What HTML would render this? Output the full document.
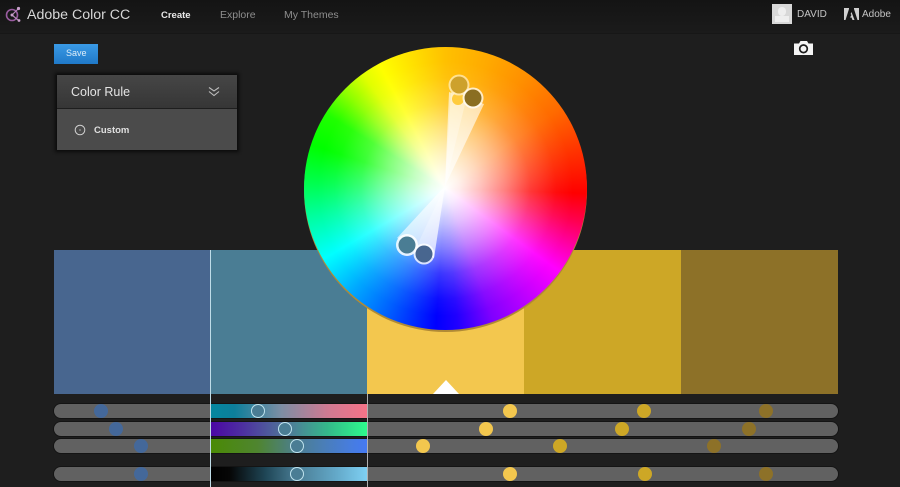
<!DOCTYPE html>
<html>
<head>
<meta charset="utf-8">
<style>
html,body{margin:0;padding:0;background:#1e1e1e;}
#p{position:relative;width:900px;height:487px;overflow:hidden;background:#1e1e1e;font-family:"Liberation Sans",sans-serif;color:#ddd;}
#p div{position:absolute;}
.t{white-space:nowrap;line-height:1;}
#hd{left:0;top:0;width:900px;height:33px;background:linear-gradient(#141414,#1b1b1b);border-bottom:1px solid #171717;}
.sw{top:250px;height:143.5px;}
.tr{left:54px;width:784px;height:14px;border-radius:7px;background:#616161;box-shadow:0 0 0 1px #141414;}
.g{left:211px;width:156px;height:14px;}
.d{width:14px;height:14px;border-radius:50%;}
.r{width:12px;height:12px;border-radius:50%;border:1px solid #bfe3ee;background:#4a7d94;}
#wheel{left:304px;top:46.5px;width:283px;height:283px;border-radius:50%;overflow:hidden;
background:conic-gradient(from 0deg,#ffc000 0deg,#ffaa00 18deg,#ff9000 35deg,#ff6a00 55deg,#ff3000 75deg,#ff0000 92deg,#ff0050 104deg,#ff00a0 114deg,#ff00ff 126deg,#c000ff 143deg,#8000ff 160deg,#2000ff 175deg,#0000ff 184deg,#0060ff 205deg,#00a8ff 222deg,#00ffff 240deg,#00ffa0 258deg,#00ff50 272deg,#00ff00 288deg,#20ff00 302deg,#90ff00 314deg,#e0ff00 324deg,#ffff00 332deg,#ffe800 342deg,#ffd400 351deg,#ffc000 360deg);}
#shadow{left:304px;top:49px;width:283px;height:283px;border-radius:50%;background:#b08a35;}
#glow{left:0;top:0;width:283px;height:283px;background:radial-gradient(circle closest-side at 50% 50%,#fff 0,rgba(255,255,255,.92) 10%,rgba(255,255,255,.74) 25%,rgba(255,255,255,.5) 42%,rgba(255,255,255,.22) 60%,rgba(255,255,255,.05) 78%,rgba(255,255,255,0) 90%);}
</style>
</head>
<body>
<div id="p">
<div id="hd"></div>
<svg style="position:absolute;left:3px;top:5px" width="20" height="20" viewBox="0 0 20 20"><circle cx="9" cy="10" r="5.5" fill="none" stroke="#9a5ca0" stroke-width="1.6"/><path d="M9 10L15 4M9 10L15 15" stroke="#b58ab8" stroke-width="1.2"/><circle cx="15.5" cy="3.5" r="1.6" fill="#c9a0cc"/><circle cx="16" cy="15.5" r="1.4" fill="#c9a0cc"/><circle cx="9" cy="10" r="1.5" fill="#c9a0cc"/></svg>
<div class="t" style="left:27px;top:8px;font-size:14.2px;color:#d8d8d8;">Adobe Color CC</div>
<div class="t" style="left:161px;top:11px;font-size:9.5px;font-weight:bold;color:#e8e8e8;">Create</div>
<div class="t" style="left:220px;top:10px;font-size:10.5px;color:#8e8e8e;">Explore</div>
<div class="t" style="left:284px;top:10px;font-size:10.5px;color:#8e8e8e;">My Themes</div>
<div style="left:772px;top:4px;width:20px;height:20px;background:#d8d8d8;"></div>
<div style="left:778px;top:7px;width:8px;height:9px;border-radius:4px;background:#eee;"></div>
<div style="left:775px;top:16px;width:14px;height:6px;background:#eee;"></div>
<div class="t" style="left:797px;top:10px;font-size:10px;color:#c4c4c4;">DAVID</div>
<svg style="position:absolute;left:844px;top:8px" width="15" height="12" viewBox="0 0 15 12"><path d="M0 0H5V1L1.5 12H0ZM15 0H10V1L13.5 12H15ZM7.5 4L10.5 12H8.5L7.5 9.5H6L7.5 7L6.6 6Z" fill="#d0d0d0"/></svg>
<div class="t" style="left:862px;top:10px;font-size:10px;color:#c4c4c4;">Adobe</div>

<div style="left:54px;top:44px;width:44px;height:20px;background:linear-gradient(#3a9ae6,#2079c8);"></div>
<div class="t" style="left:66px;top:49px;font-size:9px;color:#dcecf8;">Save</div>

<div style="left:57px;top:75px;width:180px;height:75px;box-shadow:0 0 3px 2px #0c0c0c;"></div>
<div style="left:57px;top:75px;width:180px;height:33px;background:linear-gradient(#464646,#363636);"></div>
<div style="left:57px;top:109px;width:180px;height:41px;background:#4b4b4b;"></div>
<div class="t" style="left:71px;top:86px;font-size:12.5px;color:#e4e4e4;">Color Rule</div>
<svg style="position:absolute;left:208px;top:86px" width="12" height="11" viewBox="0 0 12 11"><path d="M1 1.5L6 5L11 1.5M1 5.5L6 9.5L11 5.5" fill="none" stroke="#bdbdbd" stroke-width="1.1"/></svg>
<svg style="position:absolute;left:74px;top:124px" width="12" height="12" viewBox="0 0 12 12"><circle cx="6" cy="6" r="4.8" fill="none" stroke="#d0d0d0" stroke-width="1"/><circle cx="6" cy="6" r="1" fill="#888"/></svg>
<div class="t" style="left:94px;top:126px;font-size:9.5px;font-weight:bold;color:#e0e0e0;">Custom</div>

<svg style="position:absolute;left:793px;top:40px" width="21" height="16" viewBox="0 0 21 16"><path d="M1 3.5H6L7.5 1H14L15.5 3.5H20V15H1Z" fill="#f4f4f4"/><circle cx="10.5" cy="8.8" r="3.8" fill="none" stroke="#1c1c1c" stroke-width="1.7"/></svg>

<div class="sw" style="left:54px;width:156px;background:#48668f;"></div>
<div class="sw" style="left:210px;width:157px;background:#4a7d94;"></div>
<div class="sw" style="left:367px;width:157px;background:#f3c74e;"></div>
<div class="sw" style="left:524px;width:157px;background:#cda726;"></div>
<div class="sw" style="left:681px;width:157px;background:#8d7128;"></div>
<div style="left:433px;top:380px;width:0;height:0;border-left:13px solid transparent;border-right:13px solid transparent;border-bottom:14px solid #fff;"></div>

<div class="tr" style="top:404px;"></div>
<div class="tr" style="top:422px;"></div>
<div class="tr" style="top:439px;"></div>
<div class="tr" style="top:467px;"></div>

<div class="g" style="top:404px;background:linear-gradient(90deg,#04879f 0,#0d7f9b 15%,#7d8ea4 45%,#d07a92 75%,#f57388 100%);"></div>
<div class="g" style="top:422px;background:linear-gradient(90deg,#4b07a4 0,#4d2fa0 20%,#4f7a98 50%,#34b98a 75%,#2dfb8c 100%);"></div>
<div class="g" style="top:439px;background:linear-gradient(90deg,#4a8a05 0,#4f8530 30%,#4c7e90 55%,#477de0 90%,#4579f2 100%);"></div>
<div class="g" style="top:467px;background:linear-gradient(90deg,#000 0,#060606 12%,#1f4656 35%,#4a7d94 55%,#63a8c8 80%,#7ed0f3 100%);"></div>
<div style="left:210px;top:250px;width:1px;height:237px;background:#bfdde8;"></div>
<div style="left:367px;top:394px;width:1px;height:93px;background:#b0b0b0;"></div>

<div class="d" style="left:94px;top:404px;background:#44689a;"></div>
<div class="d" style="left:109px;top:422px;background:#44689a;"></div>
<div class="d" style="left:134px;top:439px;background:#44689a;"></div>
<div class="d" style="left:134px;top:467px;background:#44689a;"></div>

<div class="r" style="left:251px;top:404px;"></div>
<div class="r" style="left:278px;top:422px;"></div>
<div class="r" style="left:290px;top:439px;"></div>
<div class="r" style="left:290px;top:467px;"></div>

<div class="d" style="left:503px;top:404px;background:#f3c74e;"></div>
<div class="d" style="left:479px;top:422px;background:#f3c74e;"></div>
<div class="d" style="left:416px;top:439px;background:#f3c74e;"></div>
<div class="d" style="left:503px;top:467px;background:#f3c74e;"></div>

<div class="d" style="left:637px;top:404px;background:#cda726;"></div>
<div class="d" style="left:615px;top:422px;background:#cda726;"></div>
<div class="d" style="left:553px;top:439px;background:#cda726;"></div>
<div class="d" style="left:638px;top:467px;background:#cda726;"></div>

<div class="d" style="left:759px;top:404px;background:#8d7128;"></div>
<div class="d" style="left:742px;top:422px;background:#8d7128;"></div>
<div class="d" style="left:707px;top:439px;background:#8d7128;"></div>
<div class="d" style="left:759px;top:467px;background:#8d7128;"></div>

<div id="shadow"></div>
<div id="wheel"><div id="glow"></div></div>

<svg style="position:absolute;left:300px;top:40px" width="300" height="300" viewBox="300 40 300 300">
<path d="M445 186L449 92L484 104Z" fill="#fff" fill-opacity=".62"/>
<path d="M445 186L451 92L468 92Z" fill="#fff" fill-opacity=".3"/>
<path d="M445 186L397 238L434 258Z" fill="#fff" fill-opacity=".62"/>
<path d="M445 186L414 252L434 258Z" fill="#fff" fill-opacity=".25"/>
<circle cx="458" cy="99" r="6" fill="#ffcb3c"/>
<circle cx="459" cy="85" r="10.5" fill="#fff" fill-opacity=".55"/>
<circle cx="473" cy="98" r="10.5" fill="#fff" fill-opacity=".75"/>
<circle cx="459" cy="85" r="8.5" fill="#cda12c"/>
<circle cx="473" cy="98" r="8.5" fill="#8a6e22"/>
<circle cx="407" cy="245" r="11" fill="#fff" fill-opacity=".85"/>
<circle cx="424" cy="254" r="10.5" fill="#fff" fill-opacity=".8"/>
<circle cx="407" cy="245" r="8.5" fill="#4a7d94"/>
<circle cx="424" cy="254" r="8.5" fill="#48668f"/>
</svg>
</div>
</body>
</html>
